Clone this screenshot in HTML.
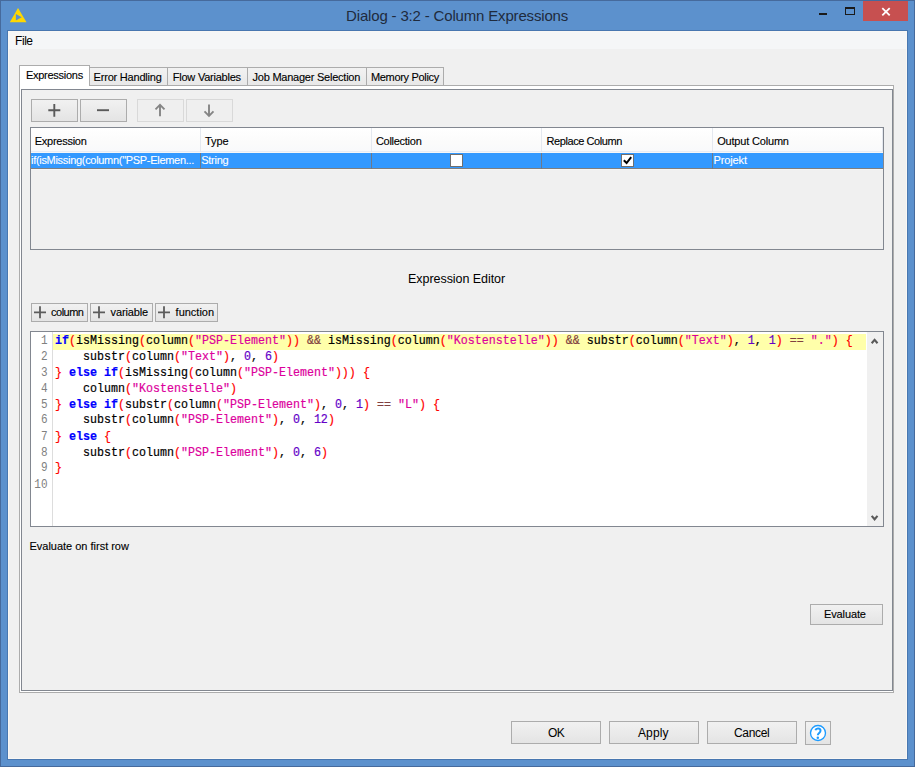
<!DOCTYPE html>
<html><head><meta charset="utf-8">
<style>
*{margin:0;padding:0;box-sizing:border-box}
html,body{width:915px;height:767px;overflow:hidden}
body{position:relative;background:#5c91cd;font-family:"Liberation Sans",sans-serif;color:#000}
.a{position:absolute}
.t{position:absolute;white-space:nowrap;line-height:1}
#frame{left:0;top:0;width:915px;height:767px;border:1px solid #466a9c}
#client{left:7px;top:30px;width:901px;height:730px;background:#f0f0f0;border:1px solid #4877b0;box-shadow:inset 0 0 0 1px #f9f7f4}
#menu{left:9px;top:32px;width:897px;height:17px;background:#f5f6f7}
.btn{position:absolute;border:1px solid #acacac;background:linear-gradient(#f1f1f1,#e4e4e4)}
.btn.dis{border-color:#d9d9d9;background:#efefef}
.tab{position:absolute;top:67px;height:19px;border:1px solid #acacac;background:linear-gradient(#f2f2f2,#e8e8e8)}
.ui{font-size:11px;-webkit-text-stroke:0.12px currentColor}
.hd{position:absolute;top:128px;height:24px;background:linear-gradient(#ffffff,#fbfbfb 60%,#f8f9fb)}
.code{font-family:"Liberation Mono",monospace;font-size:11.667px;letter-spacing:0;white-space:pre;line-height:14.679px;transform:scaleY(1.09);transform-origin:0 0;-webkit-text-stroke:0.18px currentColor}
.k{color:#0000ff;font-weight:bold}.p{color:#ff0000}.s{color:#dc009c}.n{color:#6400c8}.o{color:#804040}
</style></head><body>
<div class="a" id="frame"></div>
<!-- title bar -->
<svg class="a" style="left:9px;top:7px" width="19" height="17" viewBox="0 0 19 17"><path d="M9 1 L17.5 15.3 L0.8 15.3 Z" fill="#ffd800"/><path d="M6.9 7 L12.7 10.2 L6.9 13.4 Z" fill="#5c91cd"/></svg>
<div class="t" id="title" style="left:346.1px;top:8px;font-size:15px;color:#1f2b3d;letter-spacing:-0.170px">Dialog - 3:2 - Column Expressions</div>
<div class="a" style="left:819px;top:13px;width:8px;height:2px;background:#1a1a1a"></div>
<div class="a" style="left:845px;top:7px;width:10px;height:8px;border:1px solid #1a1a1a;border-top-width:2px"></div>
<div class="a" style="left:863px;top:1px;width:45px;height:20px;background:#c75050"></div>
<svg class="a" style="left:881px;top:7px" width="10" height="10" viewBox="0 0 10 10"><path d="M1.3 1.1 L8.7 8.3 M8.7 1.1 L1.3 8.3" stroke="#fff" stroke-width="1.8" fill="none"/></svg>
<!-- client -->
<div class="a" id="client"></div>
<div class="a" id="menu"></div>
<div class="t" id="file" style="left:15.1px;top:35px;font-size:12px;letter-spacing:-0.461px">File</div>
<!-- tabs -->
<div class="a" style="left:19px;top:85px;width:875px;height:608px;border:1px solid #acacac;background:#fff"></div>
<div class="a" style="left:21px;top:89px;width:872px;height:602px;border:1px solid #828790;background:#f0f0f0"></div>
<div class="tab" style="left:89px;width:79px"></div>
<div class="tab" style="left:167px;width:81px"></div>
<div class="tab" style="left:247px;width:120px"></div>
<div class="tab" style="left:366px;width:78px"></div>
<div class="a" style="left:19px;top:65px;width:71px;height:21px;border:1px solid #acacac;border-bottom:none;background:#fff"></div><div class="a" style="left:20px;top:85px;width:69px;height:1px;background:#fff"></div>
<div class="t ui" id="tb1" style="left:25.9px;top:70px;letter-spacing:-0.266px">Expressions</div>
<div class="t ui" id="tb2" style="left:93.6px;top:72px;letter-spacing:-0.209px">Error Handling</div>
<div class="t ui" id="tb3" style="left:172.8px;top:72px;letter-spacing:-0.238px">Flow Variables</div>
<div class="t ui" id="tb4" style="left:252.6px;top:72px;letter-spacing:-0.239px">Job Manager Selection</div>
<div class="t ui" id="tb5" style="left:370.9px;top:72px;letter-spacing:-0.317px">Memory Policy</div>
<!-- add/remove buttons -->
<div class="btn" style="left:31px;top:99px;width:47px;height:23px"></div>
<div class="btn" style="left:80px;top:99px;width:47px;height:23px"></div>
<div class="btn dis" style="left:137px;top:99px;width:47px;height:23px"></div>
<div class="btn dis" style="left:186px;top:99px;width:47px;height:23px"></div>
<svg class="a" style="left:31px;top:99px" width="210" height="23" viewBox="0 0 210 23">
<path d="M17.3 11.3 H29.3 M23.3 4.9 V17.7" stroke="#5a5a5a" stroke-width="1.9" fill="none"/>
<path d="M66 11.2 H78" stroke="#5a5a5a" stroke-width="1.9" fill="none"/>
<path d="M129 5.8 V17.2 M124.5 10.4 L129 5.9 L133.5 10.4" stroke="#858585" stroke-width="1.9" fill="none"/>
<path d="M178 5.4 V16.8 M173.5 12.4 L178 16.9 L182.5 12.4" stroke="#858585" stroke-width="1.9" fill="none"/>
</svg>
<!-- table -->
<div class="a" style="left:30px;top:127px;width:854px;height:123px;border:1px solid #828790;background:#f0f0f0"></div>
<div class="hd" style="left:31px;width:852px"></div>
<div class="a" style="left:31px;top:151px;width:852px;height:1px;background:#e7ecf5"></div>
<div class="a" style="left:31px;top:152px;width:852px;height:1px;background:#f7f7f7"></div>
<div class="a" style="left:200px;top:128px;width:1px;height:24px;background:#e4e8ef"></div>
<div class="a" style="left:371px;top:128px;width:1px;height:24px;background:#e4e8ef"></div>
<div class="a" style="left:541px;top:128px;width:1px;height:24px;background:#e4e8ef"></div>
<div class="a" style="left:712px;top:128px;width:1px;height:24px;background:#e4e8ef"></div>
<div class="a" style="left:882px;top:128px;width:1px;height:24px;background:#e4e8ef"></div>
<div class="t ui" id="h1" style="left:34.8px;top:136px;letter-spacing:-0.272px">Expression</div>
<div class="t ui" id="h2" style="left:205.0px;top:136px;letter-spacing:-0.115px">Type</div>
<div class="t ui" id="h3" style="left:375.9px;top:136px;letter-spacing:-0.271px">Collection</div>
<div class="t ui" id="h4" style="left:546.5px;top:136px;letter-spacing:-0.416px">Replace Column</div>
<div class="t ui" id="h5" style="left:717.2px;top:136px;letter-spacing:-0.183px">Output Column</div>
<div class="a" style="left:31px;top:153px;width:852px;height:15px;background:#3399ff"></div>
<div class="a" style="left:31px;top:168px;width:852px;height:1px;background:#7f7f7f"></div>
<div class="a" style="left:31px;top:169px;width:852px;height:1px;background:#f6f6f6"></div>
<div class="a" style="left:200px;top:153px;width:1px;height:16px;background:#6b7a8c"></div>
<div class="a" style="left:371px;top:153px;width:1px;height:16px;background:#6b7a8c"></div>
<div class="a" style="left:541px;top:153px;width:1px;height:16px;background:#6b7a8c"></div>
<div class="a" style="left:712px;top:153px;width:1px;height:16px;background:#6b7a8c"></div>
<div class="t ui" id="r1" style="left:31.0px;top:155px;color:#fff;letter-spacing:-0.301px">if(isMissing(column("PSP-Elemen...</div>
<div class="t ui" id="r2" style="left:201.2px;top:155px;color:#fff;letter-spacing:-0.258px">String</div>
<div class="t ui" id="r5" style="left:713.4px;top:155px;color:#fff;letter-spacing:-0.093px">Projekt</div>
<div class="a" style="left:450px;top:154px;width:13px;height:13px;border:1px solid #6f6f6f;background:#fff"></div>
<div class="a" style="left:621px;top:154px;width:13px;height:13px;border:1px solid #6f6f6f;background:#fff"></div>
<svg class="a" style="left:621px;top:154px" width="13" height="13" viewBox="0 0 13 13"><path d="M2.8 6.3 L5.6 9.0 L10.2 3.2" stroke="#000" stroke-width="2" fill="none"/></svg>
<!-- expression editor -->
<div class="t" id="ee" style="left:408.1px;top:273px;font-size:12.5px;letter-spacing:-0.057px">Expression Editor</div>
<div class="btn" style="left:31px;top:303px;width:57px;height:19px"></div>
<div class="btn" style="left:90px;top:303px;width:63px;height:19px"></div>
<div class="btn" style="left:155px;top:303px;width:63px;height:19px"></div>
<svg class="a" style="left:31px;top:303px" width="190" height="19" viewBox="0 0 190 19">
<path d="M3 9.3 H15 M9 3.3 V15.3" stroke="#5c5c5c" stroke-width="1.8" fill="none"/>
<path d="M62 9.3 H74 M68 3.3 V15.3" stroke="#5c5c5c" stroke-width="1.8" fill="none"/>
<path d="M127 9.3 H139 M133 3.3 V15.3" stroke="#5c5c5c" stroke-width="1.8" fill="none"/>
</svg>
<div class="t ui" id="b1" style="left:51.0px;top:307px;letter-spacing:-0.495px">column</div>
<div class="t ui" id="b2" style="left:110.6px;top:307px;letter-spacing:-0.154px">variable</div>
<div class="t ui" id="b3" style="left:175.6px;top:307px;letter-spacing:-0.004px">function</div>
<!-- editor -->
<div class="a" style="left:30px;top:331px;width:854px;height:196px;border:1px solid #828790;background:#fff"></div>
<div class="a" style="left:52px;top:332px;width:1px;height:194px;background:#dddddd"></div>
<div class="a" style="left:53px;top:334px;width:813px;height:16px;background:#ffffaa"></div>
<div class="a" style="left:867px;top:332px;width:16px;height:194px;background:#f0f0f0"></div>
<svg class="a" style="left:867px;top:332px" width="16" height="194" viewBox="0 0 16 194">
<path d="M4.7 11.3 L7.6 7.9 L10.5 11.3" stroke="#5a5a5a" stroke-width="2.1" fill="none"/>
<path d="M4.7 183.9 L7.6 187.3 L10.5 183.9" stroke="#5a5a5a" stroke-width="2.1" fill="none"/>
</svg>
<div class="a code" id="ln" style="left:30px;top:333px;width:17.5px;text-align:right;color:#808080;font-size:11px;-webkit-text-stroke:0">1
2
3
4
5
6
7
8
9
10</div>
<div class="a code" id="code" style="left:55px;top:333px"><span class="k">if</span><span class="p">(</span>isMissing<span class="p">(</span>column<span class="p">(</span><span class="s">"PSP-Element"</span><span class="p">))</span> <span class="o">&amp;&amp;</span> isMissing<span class="p">(</span>column<span class="p">(</span><span class="s">"Kostenstelle"</span><span class="p">))</span> <span class="o">&amp;&amp;</span> substr<span class="p">(</span>column<span class="p">(</span><span class="s">"Text"</span><span class="p">)</span>, <span class="n">1</span>, <span class="n">1</span><span class="p">)</span> <span class="o">==</span> <span class="s">"."</span><span class="p">)</span> <span class="p">{</span>
    substr<span class="p">(</span>column<span class="p">(</span><span class="s">"Text"</span><span class="p">)</span>, <span class="n">0</span>, <span class="n">6</span><span class="p">)</span>
<span class="p">}</span> <span class="k">else</span> <span class="k">if</span><span class="p">(</span>isMissing<span class="p">(</span>column<span class="p">(</span><span class="s">"PSP-Element"</span><span class="p">)))</span> <span class="p">{</span>
    column<span class="p">(</span><span class="s">"Kostenstelle"</span><span class="p">)</span>
<span class="p">}</span> <span class="k">else</span> <span class="k">if</span><span class="p">(</span>substr<span class="p">(</span>column<span class="p">(</span><span class="s">"PSP-Element"</span><span class="p">)</span>, <span class="n">0</span>, <span class="n">1</span><span class="p">)</span> <span class="o">==</span> <span class="s">"L"</span><span class="p">)</span> <span class="p">{</span>
    substr<span class="p">(</span>column<span class="p">(</span><span class="s">"PSP-Element"</span><span class="p">)</span>, <span class="n">0</span>, <span class="n">12</span><span class="p">)</span>
<span class="p">}</span> <span class="k">else</span> <span class="p">{</span>
    substr<span class="p">(</span>column<span class="p">(</span><span class="s">"PSP-Element"</span><span class="p">)</span>, <span class="n">0</span>, <span class="n">6</span><span class="p">)</span>
<span class="p">}</span></div>
<!-- evaluate -->
<div class="t ui" id="ev" style="left:29.5px;top:541px;letter-spacing:-0.012px">Evaluate on first row</div>
<div class="btn" style="left:810px;top:604px;width:73px;height:21px"></div>
<div class="t ui" id="evb" style="left:823.9px;top:609px;letter-spacing:-0.102px">Evaluate</div>
<!-- bottom buttons -->
<div class="btn" style="left:511px;top:721px;width:90px;height:23px"></div>
<div class="btn" style="left:609px;top:721px;width:90px;height:23px"></div>
<div class="btn" style="left:707px;top:721px;width:90px;height:23px"></div>
<div class="btn" style="left:805px;top:721px;width:26px;height:24px"></div>
<div class="t" id="ok" style="left:548.0px;top:727px;font-size:12px;letter-spacing:-0.672px">OK</div>
<div class="t" id="ap" style="left:637.9px;top:727px;font-size:12px;letter-spacing:0.154px">Apply</div>
<div class="t" id="ca" style="left:733.9px;top:727px;font-size:12px;letter-spacing:-0.293px">Cancel</div>
<svg class="a" style="left:808px;top:723px" width="20" height="20" viewBox="0 0 20 20"><circle cx="10" cy="10" r="7.5" fill="#fff" stroke="#1c9bff" stroke-width="1.35"/><path d="M7.4 7.3 C8 4.7 12.7 4.9 12.5 7.8 C12.4 9.9 9.8 10 9.8 12.3" stroke="#1c9bff" stroke-width="2" fill="none"/><circle cx="9.8" cy="14.7" r="1.25" fill="#1c9bff"/></svg>
</body></html>
